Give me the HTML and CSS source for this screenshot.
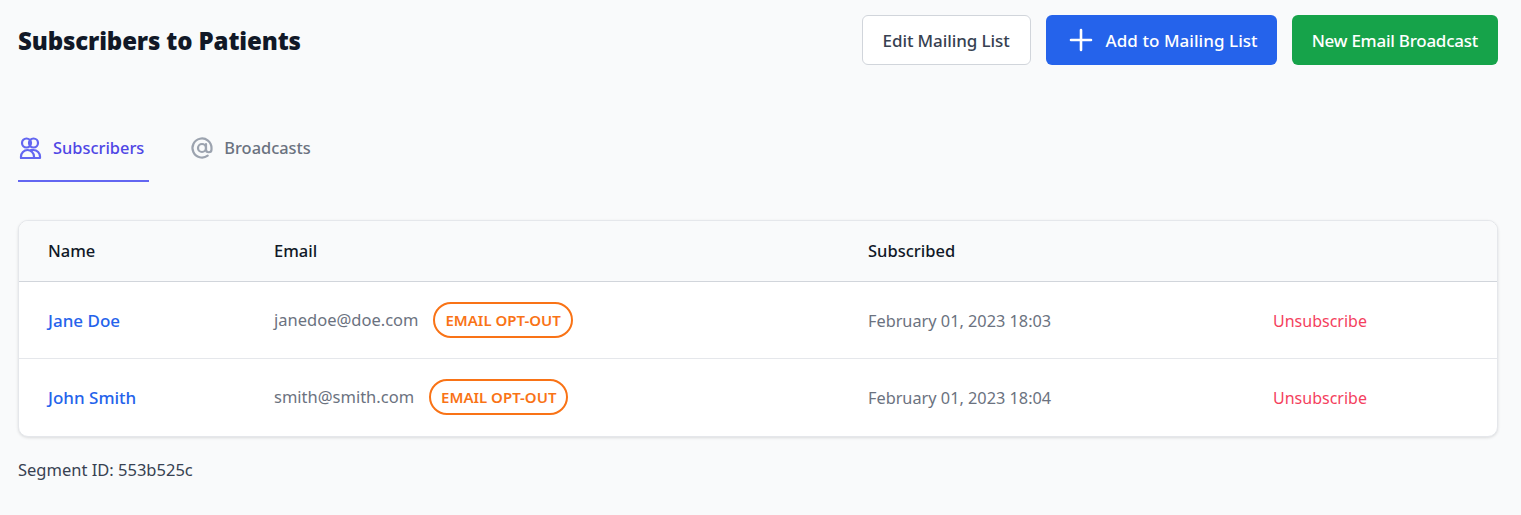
FILE: index.html
```html
<!DOCTYPE html>
<html lang="en">

    <head>
        <meta charset="UTF-8">
        <meta name="viewport" content="width=device-width, initial-scale=1.0">
        <title>Subscribers to Patients</title>
        <link rel="stylesheet" href="styles.css">
    </head>

    <body>
        <div class="container">
            <div class="pageHead">
                <h1>Subscribers to Patients</h1>
                <div class="actions">
                    <a class="btn btnWhite" href="#">Edit Mailing List</a>
                    <a class="btn btnBlue" href="#">
                        <svg class="plus" viewBox="0 0 24 24" fill="none" stroke="currentColor" stroke-width="2.6" stroke-linecap="round">
                            <path d="M12 2v20M2 12h20" />
                        </svg>
                        Add to Mailing List
                    </a>
                    <a class="btn btnGreen" href="#">New Email Broadcast</a>
                </div>
            </div>

            <div class="tabs">
                <a class="tab active" href="#">
                    <svg class="tabIcon" viewBox="0 0 24 24" fill="none" stroke="currentColor" stroke-width="2.2" stroke-linecap="round" stroke-linejoin="round">
                        <circle cx="8.5" cy="7" r="4.5" />
                        <circle cx="15.5" cy="7" r="4.5" />
                        <path d="M3 22v-1.500a6.500 6.500 0 0 1 13 0V22" />
                        <path d="M13 14h2.500a6.500 6.500 0 0 1 6.500 6.500V22H3" />
                    </svg>
                    Subscribers
                </a>
                <a class="tab" href="#">
                    <svg class="tabIcon" viewBox="0 0 24 24" fill="none" stroke="currentColor" stroke-width="2.2" stroke-linecap="round" stroke-linejoin="round">
                        <circle cx="13" cy="12" r="4" />
                        <path d="M17 8v5.500a2.750 2.750 0 0 0 5.500 0V12a9.500 9.500 0 1 0-3.800 7.600" />
                    </svg>
                    Broadcasts
                </a>
            </div>

            <div class="card">
                <table>
                    <thead>
                        <tr>
                            <th class="colName">Name</th>
                            <th class="colEmail">Email</th>
                            <th class="colDate">Subscribed</th>
                            <th></th>
                        </tr>
                    </thead>
                    <tbody>
                        <tr>
                            <td><a class="nameLink" href="#">Jane Doe</a></td>
                            <td>
                                <div class="emailCell"><span class="emailText">janedoe@doe.com</span> <span class="badge">EMAIL OPT-OUT</span></div>
                            </td>
                            <td class="date">February 01, 2023 18:03</td>
                            <td><a class="unsub" href="#">Unsubscribe</a></td>
                        </tr>
                        <tr>
                            <td><a class="nameLink" href="#">John Smith</a></td>
                            <td>
                                <div class="emailCell"><span class="emailText">smith@smith.com</span> <span class="badge">EMAIL OPT-OUT</span></div>
                            </td>
                            <td class="date">February 01, 2023 18:04</td>
                            <td><a class="unsub" href="#">Unsubscribe</a></td>
                        </tr>
                    </tbody>
                </table>
            </div>

            <p class="segment">Segment ID: 553b525c</p>
        </div>
    </body>

</html>
```

FILE: styles.css
```css
* {
    box-sizing: border-box;
    padding: 0;
    margin: 0;
}

body {
    background-color: #f9fafb;
    font-family: "Noto Sans", "Open Sans", sans-serif;
    font-size: 16px;
    color: #374151;
    overflow: hidden;
}

a {
    text-decoration: none;
}

.container {
    padding: 15px 23px 0 18px;
}

.pageHead {
    display: flex;
    align-items: center;
    justify-content: space-between;
    height: 50px;
}

.pageHead h1 {
    font-size: 24px;
    font-weight: 900;
    letter-spacing: -0.13px;
    color: #111827;
}

.actions {
    display: flex;
    gap: 15px;
}

.btn {
    display: flex;
    align-items: center;
    height: 50px;
    padding: 0 20px;
    border-radius: 6px;
    font-size: 17px;
    font-weight: 500;
    letter-spacing: -0.1px;
}

.btnWhite {
    background-color: #fff;
    border: 1px solid #d1d5db;
    color: #374151;
}

.btnBlue {
    background-color: #2563eb;
    color: #fff;
    gap: 13px;
    padding: 0 19px 0 23px;
    letter-spacing: 0.05px;
}

.btnGreen {
    background-color: #16a34a;
    color: #fff;
    letter-spacing: -0.25px;
}

.plus {
    width: 24px;
    height: 24px;
}

.tabs {
    display: flex;
    gap: 40px;
    margin-top: 60px;
}

.tab {
    display: flex;
    align-items: center;
    gap: 11px;
    height: 57px;
    padding: 0 5px 10px 0;
    font-size: 16.4px;
    font-weight: 500;
    color: #6b7280;
    border-bottom: 2px solid transparent;
}

.tab .tabIcon {
    color: #9ca3af;
}

.tab.active {
    color: #4f46e5;
    border-bottom-color: #6366f1;
}

.tab.active .tabIcon {
    color: #6366f1;
}

.tabIcon {
    width: 24px;
    height: 24px;
}

.card {
    margin-top: 38px;
    border: 1px solid #e5e7eb;
    border-radius: 10px;
    overflow: hidden;
    background-color: #fff;
    box-shadow: 0 1px 3px rgba(0, 0, 0, 0.12);
}

table {
    width: 100%;
    border-collapse: collapse;
    table-layout: fixed;
}

th {
    height: 60px;
    padding-left: 29px;
    text-align: left;
    font-size: 16.5px;
    font-weight: 500;
    color: #111827;
    background-color: #f9fafb;
    border-bottom: 1px solid #d1d5db;
}

td {
    height: 77px;
    padding: 2px 0 0 29px;
    border-bottom: 1px solid #e5e7eb;
    font-size: 16.3px;
    color: #6b7280;
}

tbody tr:last-child td {
    border-bottom: 0;
    height: 78px;
    padding-top: 1px;
}

.colName {
    width: 226px;
}

.colEmail {
    width: 594px;
}

.colDate {
    width: 405px;
}

.nameLink {
    color: #2563eb;
    font-size: 17px;
    font-weight: 500;
}

.emailCell {
    display: flex;
    align-items: center;
    gap: 15px;
    margin-top: -1px;
    font-size: 16.5px;
}

.emailText {
    margin-bottom: 2px;
}

.badge {
    display: inline-flex;
    align-items: center;
    height: 36px;
    padding: 0 10px;
    border: 2px solid #f97316;
    border-radius: 18px;
    font-size: 15px;
    font-weight: 600;
    color: #f97316;
}

.unsub {
    color: #f43f5e;
    font-size: 16px;
}

.segment {
    margin-top: 21px;
    font-size: 16.5px;
    color: #374151;
}
```
